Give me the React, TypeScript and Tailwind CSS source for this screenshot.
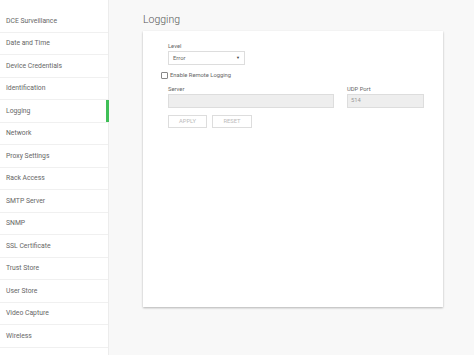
import React from "react"

const items = [
  "DCE Surveillance",
  "Date and Time",
  "Device Credentials",
  "Identification",
  "Logging",
  "Network",
  "Proxy Settings",
  "Rack Access",
  "SMTP Server",
  "SNMP",
  "SSL Certificate",
  "Trust Store",
  "User Store",
  "Video Capture",
  "Wireless",
]

export default function App() {
  return (
    <div className="flex h-[355px] w-[474px] overflow-hidden bg-[#f8f8f8] font-['Roboto','Liberation_Sans',sans-serif] text-[#4a4a4a]">
      {/* sidebar */}
      <div className="w-[109px] shrink-0 border-r border-[#ececec] bg-white pt-[10px]">
        {items.map((name) => (
          <div
            key={name}
            className="relative flex h-[22.5px] items-center border-b border-[#f0f0f0] pl-[6px] text-[6.8px] text-[#666]"
          >
            {name}
            {name === "Logging" && (
              <span className="absolute right-[-1px] top-0 h-full w-[3px] bg-[#3fbf57]" />
            )}
          </div>
        ))}
      </div>

      {/* main */}
      <div className="flex-1 pl-[34px] pt-[13px]">
        <h1 className="text-[10.5px] font-light leading-[14px] text-[#555]">Logging</h1>
        <div className="mt-[4px] h-[276px] w-[300px] bg-white pl-[25px] pt-[11px] shadow-[0_1px_2px_rgba(0,0,0,0.28)]">
          <div className="text-[5.8px] leading-[8px] text-[#666]">Level</div>
          <div className="mt-[1px] flex h-[14px] w-[77px] items-center justify-between border border-[#ddd] px-[4px] text-[5.8px] text-[#666]">
            <span>Error</span>
            <span className="text-[4px] text-[#444]">▼</span>
          </div>
          <label className="-ml-[7px] mt-[6px] flex items-center gap-[2px] text-[5.8px] text-[#666]">
            <span className="h-[7px] w-[7px] rounded-[1px] border border-[#888] bg-white" />
            Enable Remote Logging
          </label>
          <div className="mt-[5px] flex gap-[13px]">
            <div>
              <div className="text-[5.8px] leading-[8px] text-[#666]">Server</div>
              <div className="mt-[1px] h-[14px] w-[166px] border border-[#ddd] bg-[#eeeeee]" />
            </div>
            <div>
              <div className="text-[5.8px] leading-[8px] text-[#666]">UDP Port</div>
              <div className="mt-[1px] flex h-[14px] w-[77px] items-center border border-[#ddd] bg-[#eeeeee] px-[3px] text-[5.8px] text-[#999]">
                514
              </div>
            </div>
          </div>
          <div className="mt-[7px] flex gap-[5px]">
            <button className="flex h-[13px] w-[39px] items-center justify-center border border-[#ddd] bg-white text-[5.8px] text-[#bbb]">
              APPLY
            </button>
            <button className="flex h-[13px] w-[40px] items-center justify-center border border-[#ddd] bg-white text-[5.8px] text-[#bbb]">
              RESET
            </button>
          </div>
        </div>
      </div>
    </div>
  )
}
